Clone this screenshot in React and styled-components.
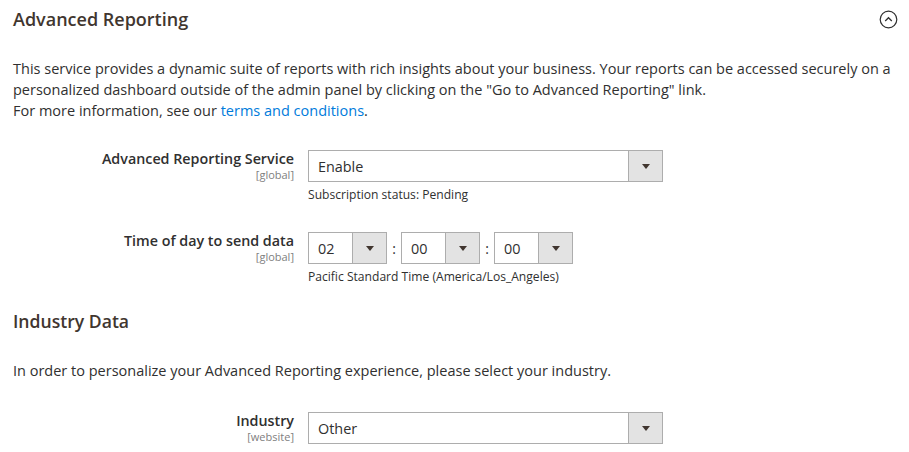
import React from "react";
import styled, { createGlobalStyle } from "styled-components";

const GlobalStyle = createGlobalStyle`
  body {
    margin: 0;
    background: #fff;
    font-family: "Open Sans", "DejaVu Sans", sans-serif;
    color: #303030;
  }
`;

const Page = styled.div`
  padding: 0 11px 0 13px;
  width: 909px;
  box-sizing: border-box;
`;

const Header = styled.div`
  display: flex;
  justify-content: space-between;
  align-items: center;
  height: 38px;
`;

const Title = styled.h2`
  margin: 0;
  font-size: 18px;
  font-weight: 600;
  color: #41362f;
  line-height: 20px;
`;

const SubTitle = styled.h3`
  margin: ${(p) => p.$top || 0}px 0 0;
  font-size: 17.6px;
  font-weight: 600;
  color: #41362f;
  line-height: 20px;
`;

const Toggle = styled.button`
  border: 0;
  background: none;
  padding: 0;
  width: 20px;
  height: 20px;
  display: flex;
  align-items: center;
  justify-content: center;
  cursor: pointer;
`;

const Text = styled.p`
  margin: ${(p) => p.$top || 0}px 0 0;
  font-size: 14.5px;
  line-height: 21px;
`;

const Link = styled.a`
  color: #007bdb;
  text-decoration: none;
`;

const Row = styled.div`
  display: grid;
  grid-template-columns: 281px 355px;
  column-gap: 14px;
  margin-top: ${(p) => p.$top || 0}px;
`;

const Label = styled.div`
  text-align: right;
  display: flex;
  flex-direction: column;
  align-items: flex-end;
`;

const LabelText = styled.span`
  font-size: 14.3px;
  font-weight: 600;
  line-height: 18px;
`;

const Scope = styled.span`
  font-size: 11px;
  line-height: 14px;
  color: #808080;
`;

const Control = styled.div`
  display: flex;
  flex-direction: column;
`;

const Note = styled.div`
  margin-top: 5px;
  font-size: 12.1px;
  line-height: 16px;
`;

const SelectBox = styled.div`
  display: flex;
  width: ${(p) => p.$width}px;
  height: 32px;
  box-sizing: border-box;
  border: 1px solid #adadad;
  background: #fff;
`;

const Value = styled.div`
  flex: 1;
  display: flex;
  align-items: center;
  padding-left: 9px;
  font-size: 14.4px;
`;

const Arrow = styled.div`
  width: 33px;
  border-left: 1px solid #adadad;
  background: #e3e3e3;
  display: flex;
  align-items: center;
  justify-content: center;
  &::after {
    content: "";
    border-left: 4px solid transparent;
    border-right: 4px solid transparent;
    border-top: 5px solid #41362f;
  }
`;

const TimeGroup = styled.div`
  display: flex;
  align-items: center;
`;

const Colon = styled.span`
  width: 14px;
  text-align: center;
  font-size: 14px;
`;

function Select({ value, width }) {
  return (
    <SelectBox $width={width}>
      <Value>{value}</Value>
      <Arrow />
    </SelectBox>
  );
}

function CollapseIcon() {
  return (
    <svg width="19" height="19" viewBox="0 0 19 19">
      <circle cx="9.5" cy="9.5" r="8.3" fill="none" stroke="#303030" strokeWidth="1.2" />
      <path d="M6.2 11 L9.5 7.7 L12.8 11" fill="none" stroke="#303030" strokeWidth="1.3" />
    </svg>
  );
}

export default function App() {
  return (
    <Page>
      <GlobalStyle />
      <Header>
        <Title>Advanced Reporting</Title>
        <Toggle aria-label="Collapse">
          <CollapseIcon />
        </Toggle>
      </Header>
      <Text $top={20}>
        This service provides a dynamic suite of reports with rich insights about your business. Your reports can be
        accessed securely on a personalized dashboard outside of the admin panel by clicking on the "Go to Advanced
        Reporting" link.
        <br />
        For more information, see our <Link href="#">terms and conditions</Link>.
      </Text>

      <Row $top={29}>
        <Label>
          <LabelText>Advanced Reporting Service</LabelText>
          <Scope>[global]</Scope>
        </Label>
        <Control>
          <Select value="Enable" width={355} />
          <Note>Subscription status: Pending</Note>
        </Control>
      </Row>

      <Row $top={29}>
        <Label>
          <LabelText>Time of day to send data</LabelText>
          <Scope>[global]</Scope>
        </Label>
        <Control>
          <TimeGroup>
            <Select value="02" width={79} />
            <Colon>:</Colon>
            <Select value="00" width={79} />
            <Colon>:</Colon>
            <Select value="00" width={79} />
          </TimeGroup>
          <Note>Pacific Standard Time (America/Los_Angeles)</Note>
        </Control>
      </Row>

      <SubTitle $top={26}>Industry Data</SubTitle>
      <Text $top={29}>In order to personalize your Advanced Reporting experience, please select your industry.</Text>

      <Row $top={31}>
        <Label>
          <LabelText>Industry</LabelText>
          <Scope>[website]</Scope>
        </Label>
        <Control>
          <Select value="Other" width={355} />
        </Control>
      </Row>
    </Page>
  );
}
